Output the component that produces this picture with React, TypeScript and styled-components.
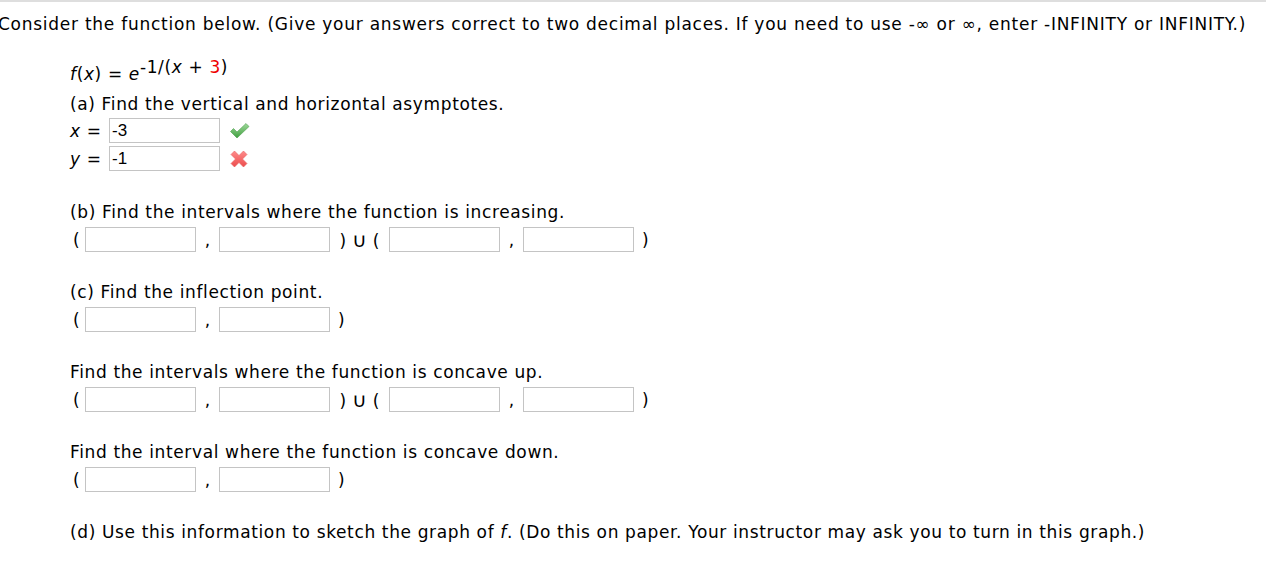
import React from "react";
import styled, { createGlobalStyle } from "styled-components";

const Global = createGlobalStyle`
  html, body { margin: 0; padding: 0; background: #fff; }
  body {
    font-family: "DejaVu Sans", Verdana, sans-serif;
    font-size: 17px;
    letter-spacing: 0.63px;
    color: #000;
  }
`;

const Page = styled.div`
  border-top: 2px solid #dedede;
  padding-top: 12px;
  width: 1266px;
  height: 562px;
  overflow: hidden;
`;

const Heading = styled.div`
  line-height: 20px;
  margin-left: -2px;
  letter-spacing: 0.74px;
  white-space: nowrap;
`;

const Body = styled.div`
  margin-left: 70px;
`;

const Formula = styled.div`
  margin-top: 30px;
  line-height: 20px;
  white-space: nowrap;
`;

const Sup = styled.span`
  position: relative;
  top: -7px;
`;

const Red = styled.span`
  color: #e00;
`;

const Section = styled.div<{ $top: number }>`
  margin-top: ${(p) => p.$top}px;
`;

const Label = styled.div`
  line-height: 20px;
  white-space: nowrap;
`;

const Rows = styled.div<{ $gap: number }>`
  margin-top: ${(p) => p.$gap}px;
  display: flex;
  flex-direction: column;
  gap: 3px;
`;

const Row = styled.div`
  display: flex;
  align-items: center;
  height: 25px;
`;

const VarLabel = styled.span`
  width: 39px;
  white-space: nowrap;
`;

const Input = styled.input`
  box-sizing: border-box;
  width: 111px;
  height: 25px;
  margin: 0;
  padding: 0 2px;
  border: 1px solid #c4c4c4;
  font-family: "Liberation Sans", Arial, sans-serif;
  font-size: 17px;
  letter-spacing: 0;
  color: #000;
  background: #fff;
  outline: none;
`;

const Sep = styled.span<{ $w: number; $align?: string; $pad?: number }>`
  width: ${(p) => p.$w}px;
  box-sizing: border-box;
  padding-left: ${(p) => p.$pad || 0}px;
  text-align: ${(p) => p.$align || "center"};
  white-space: nowrap;
  letter-spacing: 0;
`;

const Cup = styled.span`
  font-size: 20px;
  margin: 0 6px;
`;

const Mark = styled.span`
  display: inline-flex;
  margin-left: 8px;
  width: 22px;
  height: 20px;
  align-items: center;
  justify-content: center;
`;

const I = styled.i``;

const Check = () => (
  <svg width="21" height="17" viewBox="0 0 21 17">
    <defs>
      <linearGradient id="gck" x1="0" y1="0" x2="0" y2="1">
        <stop offset="0" stopColor="#9fd99a" />
        <stop offset="1" stopColor="#3f9f3f" />
      </linearGradient>
    </defs>
    <path d="M1.5 9.5 L4.5 6.5 L8 10 L17 1.5 L20 4.5 L8 16 Z" fill="url(#gck)" stroke="#4c9e4c" strokeWidth="0.6" strokeLinejoin="round" />
  </svg>
);

const Cross = () => (
  <svg width="18" height="18" viewBox="0 0 18 18">
    <defs>
      <linearGradient id="gx" x1="0" y1="0" x2="0" y2="1">
        <stop offset="0" stopColor="#ff8c8c" />
        <stop offset="1" stopColor="#ec4c4c" />
      </linearGradient>
    </defs>
    <path d="M1 4.5 L4.5 1 L9 5.5 L13.5 1 L17 4.5 L12.5 9 L17 13.5 L13.5 17 L9 12.5 L4.5 17 L1 13.5 L5.5 9 Z" fill="url(#gx)" stroke="#e66262" strokeWidth="0.6" strokeLinejoin="round" />
  </svg>
);

const Interval = ({ pairs }: { pairs: number }) => (
  <Row>
    <Sep $w={15} $align="left" $pad={3}>(</Sep>
    <Input />
    <Sep $w={23}>,</Sep>
    <Input />
    {pairs === 2 && (
      <>
        <Sep $w={59}>
          )<Cup>∪</Cup>(
        </Sep>
        <Input />
        <Sep $w={23}>,</Sep>
        <Input />
      </>
    )}
    <Sep $w={20} $align="left" $pad={8}>)</Sep>
  </Row>
);

export default function App() {
  return (
    <Page>
      <Global />
      <Heading>
        Consider the function below. (Give your answers correct to two decimal places. If you need to use -∞ or ∞, enter -INFINITY or INFINITY.)
      </Heading>
      <Body>
        <Formula>
          <I>f</I>(<I>x</I>) = <I>e</I>
          <Sup>
            -1/(<I>x</I> + <Red>3</Red>)
          </Sup>
        </Formula>
        <Section $top={10}>
          <Label>(a) Find the vertical and horizontal asymptotes.</Label>
          <Rows $gap={4}>
            <Row>
              <VarLabel>
                <I>x</I> =
              </VarLabel>
              <Input defaultValue="-3" />
              <Mark>
                <Check />
              </Mark>
            </Row>
            <Row>
              <VarLabel>
                <I>y</I> =
              </VarLabel>
              <Input defaultValue="-1" />
              <Mark>
                <Cross />
              </Mark>
            </Row>
          </Rows>
        </Section>
        <Section $top={31}>
          <Label>(b) Find the intervals where the function is increasing.</Label>
          <Rows $gap={5}>
            <Interval pairs={2} />
          </Rows>
        </Section>
        <Section $top={30}>
          <Label>(c) Find the inflection point.</Label>
          <Rows $gap={5}>
            <Interval pairs={1} />
          </Rows>
        </Section>
        <Section $top={30}>
          <Label>Find the intervals where the function is concave up.</Label>
          <Rows $gap={5}>
            <Interval pairs={2} />
          </Rows>
        </Section>
        <Section $top={30}>
          <Label>Find the interval where the function is concave down.</Label>
          <Rows $gap={5}>
            <Interval pairs={1} />
          </Rows>
        </Section>
        <Section $top={30}>
          <Label>
            (d) Use this information to sketch the graph of <I>f</I>. (Do this on paper. Your instructor may ask you to turn in this graph.)
          </Label>
        </Section>
      </Body>
    </Page>
  );
}
